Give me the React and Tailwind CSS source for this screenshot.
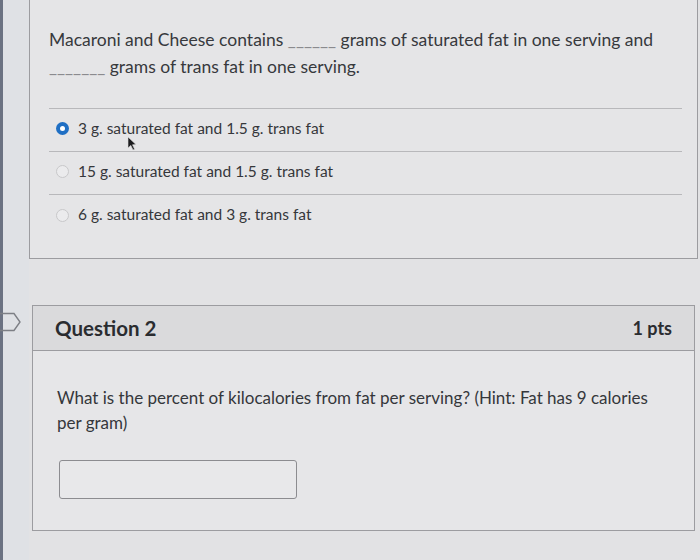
const options = [
  { label: "3 g. saturated fat and 1.5 g. trans fat", selected: true },
  { label: "15 g. saturated fat and 1.5 g. trans fat", selected: false },
  { label: "6 g. saturated fat and 3 g. trans fat", selected: false },
];

function Radio({ selected }) {
  if (selected) {
    return (
      <span className="w-[13px] h-[13px] rounded-full bg-[#1f6fc4] flex items-center justify-center shrink-0">
        <span className="w-[5px] h-[5px] rounded-full bg-white" />
      </span>
    );
  }
  return <span className="w-[13px] h-[13px] rounded-full border border-[#c8c8ca] bg-[#ebebed] shrink-0" />;
}

function Cursor() {
  return (
    <svg className="absolute left-[127px] top-[136px]" width="10" height="15" viewBox="0 0 10 15">
      <path d="M1 1 L1 12 L3.8 9.4 L6 14 L7.6 13.2 L5.5 8.8 L9 8.6 Z" fill="#1c1c1e" stroke="#ddd" strokeWidth="0.6" />
    </svg>
  );
}

export default function App() {
  return (
    <div
      className="relative w-[700px] h-[560px] overflow-hidden bg-[#e2e2e4] flex text-[#333539]"
      style={{ fontFamily: "Lato, 'Open Sans', sans-serif" }}
    >
      {/* left gutter with the question marker */}
      <div className="w-[29px] shrink-0 bg-[#dfe1e5] border-l-[3px] border-[#6b7282] flex flex-col">
        <div className="h-[312px]" />
        <svg width="22" height="20" viewBox="0 0 22 20" className="-ml-[3px]">
          <path d="M-2 1.5 H14 L20 10 L14 18.5 H-2" fill="none" stroke="#7d7f85" strokeWidth="1.4" />
        </svg>
      </div>

      <div className="flex-1 flex flex-col">
        {/* question 1 card */}
        <div className="w-[669px] h-[259px] border border-t-0 border-[#9c9ca0] bg-[#e5e5e7] pl-[19px] pr-[15px] pt-[26px]">
          <p className="text-[17.5px] leading-[27px] text-[#37393d]">
            Macaroni and Cheese contains <span className="text-[#8a8a8e]">______</span> grams of saturated fat in one serving and{" "}
            <span className="text-[#8a8a8e]">_______</span> grams of trans fat in one serving.
          </p>
          <div className="mt-[28px] border-t border-[#b8b8bb]">
            {options.map((opt, i) => (
              <div
                key={i}
                className={
                  "h-[43px] flex items-center gap-[9px] pl-[7px] pb-[3px] " +
                  (i < options.length - 1 ? "border-b border-[#b8b8bb]" : "")
                }
              >
                <Radio selected={opt.selected} />
                <span className="text-[15.5px] text-[#35373b]">{opt.label}</span>
              </div>
            ))}
          </div>
        </div>

        {/* question 2 card */}
        <div className="mt-[46px] ml-[3px] w-[663px] h-[226px] border border-[#9c9ca0] bg-[#e6e6e8] flex flex-col">
          <div className="h-[45px] shrink-0 bg-[#dadadc] border-b border-[#9c9ca0] flex items-center justify-between pl-[22px] pr-[22px]">
            <span className="text-[20.5px] font-bold text-[#2a2c30]">Question 2</span>
            <span className="text-[18px] font-bold text-[#2a2c30]">1 pts</span>
          </div>
          <div className="pl-[24px] pr-[30px] pt-[34px]">
            <p className="text-[17px] leading-[25px] text-[#35373b]">
              What is the percent of kilocalories from fat per serving? (Hint: Fat has 9 calories per gram)
            </p>
            <div className="mt-[25px] ml-[2px] w-[238px] h-[39px] rounded-[3px] border border-[#8c8c90] bg-[#e8e8ea]" />
          </div>
        </div>
      </div>

      <Cursor />
    </div>
  );
}
